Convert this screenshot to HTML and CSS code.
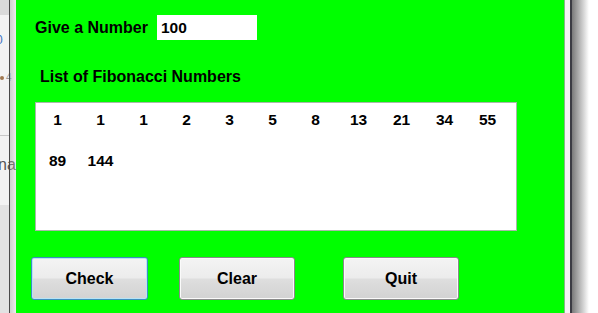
FILE: index.html
```html
<!DOCTYPE html>
<html lang="en">
<head>
    <meta charset="UTF-8">
    <meta name="viewport" content="width=device-width, initial-scale=1.0">
    <title>Fibonacci Numbers</title>
    <link rel="stylesheet" href="styles.css">
</head>
<body>

    <div class="desk">
        <!-- bit of the page behind the dialog -->
        <div class="behind">
            <div class="behind-top"></div>
            <div class="frag frag-link">0</div>
            <div class="frag frag-meta"><span class="dot"></span>4</div>
            <div class="behind-rule"></div>
            <div class="frag frag-name">na</div>
            <div class="behind-bottom"></div>
        </div>
        <div class="frame-left"></div>

        <div class="window">
            <div class="input-row">
                <label class="label" for="number">Give a Number</label>
                <input class="number-input" id="number" type="text" value="100">
            </div>

            <div class="list-title">List of Fibonacci Numbers</div>

            <div class="result" id="result">
                <span>1</span><span>1</span><span>1</span><span>2</span><span>3</span><span>5</span>
                <span>8</span><span>13</span><span>21</span><span>34</span><span>55</span>
                <span>89</span><span>144</span>
            </div>

            <div class="buttons">
                <button class="btn btn-focus" onclick="check()">Check</button>
                <button class="btn btn-clear" onclick="clearList()">Clear</button>
                <button class="btn btn-quit">Quit</button>
            </div>
        </div>

        <div class="frame-gap"></div>
        <div class="frame-right"></div>
        <div class="shadow"></div>
    </div>

    <script>
        function check() {
            const limit = parseInt(document.getElementById("number").value, 10) || 0;
            const result = document.getElementById("result");
            result.innerHTML = "";
            let a = 1, b = 1;
            if (limit >= 1) {
                result.innerHTML += "<span>1</span>";
            }
            while (b <= limit) {
                result.innerHTML += "<span>" + b + "</span>";
                const next = a + b;
                a = b;
                b = next;
            }
        }

        function clearList() {
            document.getElementById("result").innerHTML = "";
            document.getElementById("number").value = "";
        }
    </script>

</body>
</html>
```

FILE: styles.css
```css
html, body {
    margin: 0;
    padding: 0;
    background-color: #ffffff;
    font-family: "Liberation Sans", Arial, sans-serif;
}

.desk {
    display: flex;
    width: 598px;
    height: 313px;
    overflow: hidden;
}

/* page behind the window */
.behind {
    display: flex;
    flex-direction: column;
    width: 9px;
    flex-shrink: 0;
    background-color: #f3f3f3;
}

.behind-top {
    height: 15px;
    background-color: #dadada;
}

.frag {
    white-space: nowrap;
    color: #666;
}

.frag-link {
    margin-top: 18px;
    font-size: 12px;
    line-height: 14px;
    text-indent: -4px;
    color: #3a6fc0;
}

.frag-meta {
    margin-top: 24px;
    font-size: 10px;
    line-height: 14px;
    color: #999;
}

.dot {
    display: inline-block;
    width: 4px;
    height: 4px;
    margin-right: 2px;
    border-radius: 50%;
    background-color: #a07850;
    vertical-align: middle;
}

.behind-rule {
    margin-top: 50px;
    height: 1px;
    background-color: #c8c8c8;
}

.frag-name {
    margin-top: 20px;
    font-size: 16px;
    line-height: 18px;
    text-indent: -2px;
    color: #555;
}

.behind-bottom {
    margin-top: 31px;
    flex-grow: 1;
    background-color: #e2e2e2;
}

.frame-left {
    width: 6px;
    flex-shrink: 0;
    border-left: 1px solid #4a4a4a;
    background: linear-gradient(to right, rgba(150, 150, 150, 0.45), rgba(200, 200, 200, 0.35));
}

/* the green dialog */
.window {
    width: 529px;
    flex-shrink: 0;
    border-right: 1px solid #86b886;
    background-color: #00ff00;
    padding: 15px 0 0 19px;
    box-sizing: content-box;
    color: #000;
}

.input-row {
    display: flex;
    align-items: center;
    height: 25px;
}

.label {
    width: 122px;
    font-size: 16px;
    font-weight: bold;
}

.number-input {
    width: 100px;
    height: 25px;
    box-sizing: border-box;
    border: none;
    padding: 0 4px;
    margin: 0;
    font-family: "Liberation Sans", Arial, sans-serif;
    font-size: 15.5px;
    font-weight: bold;
    color: #000;
    background-color: #ffffff;
    outline: none;
}

.list-title {
    margin-top: 27px;
    margin-left: 5px;
    font-size: 16px;
    font-weight: bold;
    line-height: 20px;
}

.result {
    display: grid;
    grid-template-columns: repeat(11, 43px);
    grid-auto-rows: 20px;
    row-gap: 21px;
    align-content: start;
    width: 482px;
    height: 129px;
    margin-top: 15px;
    padding-top: 7px;
    box-sizing: border-box;
    border: 1px solid #a8b8a8;
    background-color: #ffffff;
    font-size: 15.5px;
    font-weight: bold;
    line-height: 20px;
    text-align: center;
}

.buttons {
    display: flex;
    margin-top: 26px;
    margin-left: -4px;
}

.btn {
    width: 116px;
    height: 43px;
    padding: 0;
    border: 1px solid #8a8a8a;
    border-radius: 3px;
    background: linear-gradient(#f4f4f4 0%, #ececec 48%, #dedede 52%, #d2d2d2 100%);
    box-shadow: inset 0 0 0 1px #fafafa;
    font-family: "Liberation Sans", Arial, sans-serif;
    font-size: 16px;
    font-weight: bold;
    color: #000;
    cursor: pointer;
}

.btn-focus {
    width: 117px;
    border-color: #3c8fbf;
    box-shadow: inset 0 0 0 1px #b8e4f6;
}

.btn-clear {
    margin-left: 31px;
}

.btn-quit {
    margin-left: 48px;
}

.frame-gap {
    width: 5px;
    flex-shrink: 0;
    background-color: #f4f4f4;
}

.frame-right {
    width: 2px;
    flex-shrink: 0;
    background-color: #3c3c44;
}

.shadow {
    width: 17px;
    flex-shrink: 0;
    background: linear-gradient(to right, #7a7a7a, #ffffff);
}
```
